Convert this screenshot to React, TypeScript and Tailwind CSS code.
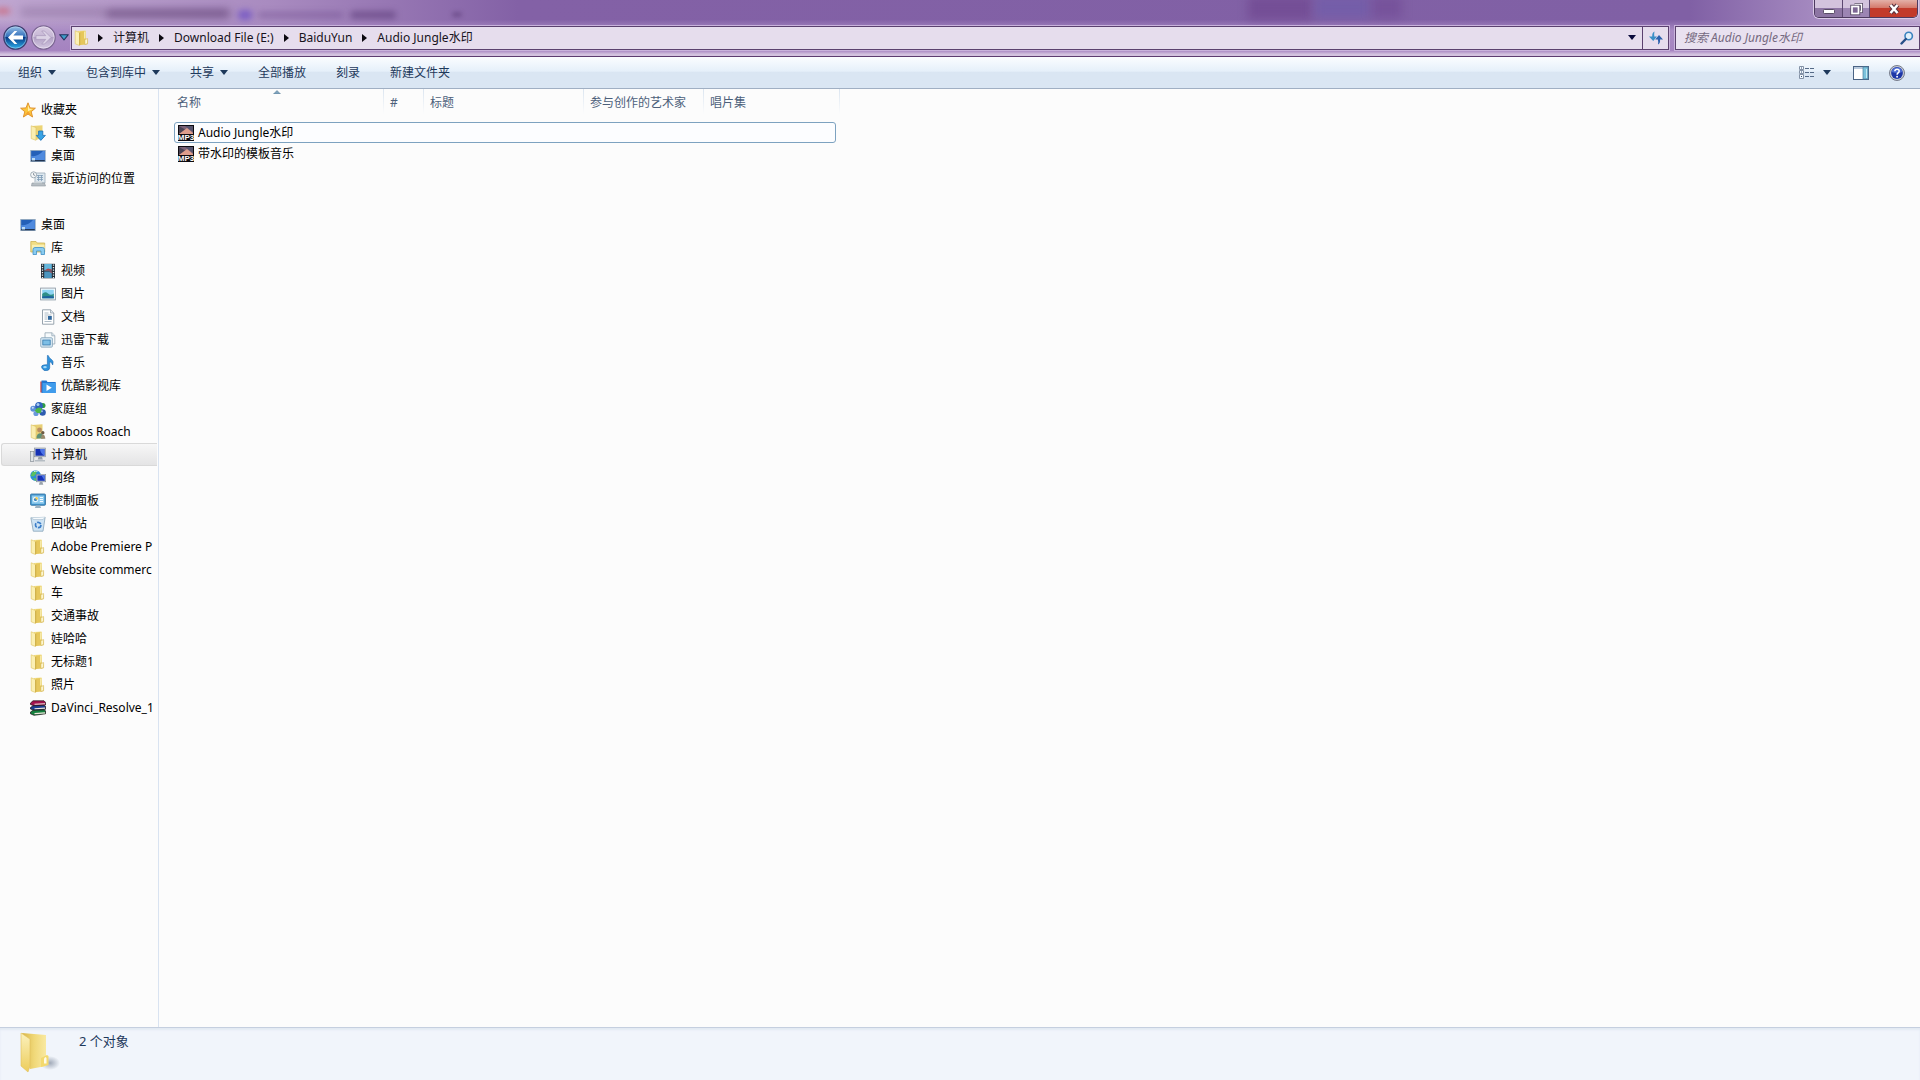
import type { ReactNode } from "react";
import clsx from "clsx";

/* ─────────────────────────────────────────────────────────
   Icons (16px grid unless noted)
───────────────────────────────────────────────────────── */

function Svg({ children, size = 16 }: { children: ReactNode; size?: number }) {
  return (
    <svg width={size} height={size} viewBox={`0 0 ${size} ${size}`} className="shrink-0" aria-hidden="true">
      {children}
    </svg>
  );
}

function FolderIcon() {
  return (
    <Svg>
      <path d="M4 1 11.5.5v13.5L5 15z" fill="#f3df83" />
      <path d="M6 1.5 11.5 1l.5 9 1.5.5v3.7L6 15z" fill="#e6c75c" />
      <path d="M1.2.8 5.5 2.5v13L1.2 13.8z" fill="#fbf0b4" stroke="#dfc35c" strokeWidth=".6" />
      <path d="M10.8 9.5 13.6 8.6v5l-2.8.9z" fill="#fdf7d0" stroke="#d0af47" strokeWidth=".6" />
      <path d="M5.7 2.8V15.2" stroke="#c29f38" strokeWidth=".8" />
      <path d="M10.8 1.5v7" stroke="#fbf2bb" strokeWidth="1.2" />
    </Svg>
  );
}

function StarIcon() {
  return (
    <Svg>
      <path
        d="M8 .8 10 5.9l5.4.3-4.2 3.5 1.4 5.3L8 12.1 3.4 15l1.4-5.3L.6 6.2 6 5.9z"
        fill="#fcc63c"
        stroke="#dd8a25"
        strokeWidth=".9"
        strokeLinejoin="round"
      />
      <path d="M8 2.8 9.3 6.7l3.5.3L8 9.2z" fill="#fff0ac" />
      <path d="M8 9.5 11 13 8 11.4 4.8 13.2z" fill="#f59a2c" />
    </Svg>
  );
}

function DownloadsIcon() {
  return (
    <Svg>
      <path d="M2 1 12.5.3V13L6 15z" fill="#ecd475" />
      <path d="M1.2.8 6 2.5v12.8l-4.8-1.7z" fill="#faeeb0" stroke="#d9bf62" strokeWidth=".6" />
      <path d="M8.6 6h4.2v4.4h2.6L10.8 15.4 6.2 10.4h2.4z" fill="#37a3e6" stroke="#1b6fb4" strokeWidth=".8" />
    </Svg>
  );
}

function DesktopIcon() {
  return (
    <Svg>
      <rect x=".3" y="2" width="15.4" height="12" fill="#8ea6bf" />
      <rect x="1.2" y="3" width="13.6" height="9" fill="#2460b8" />
      <path d="M1.2 12V8Q8 9 13 3h1.8v9z" fill="#4f8ade" />
      <rect x="1.2" y="12" width="13.6" height="1.3" fill="#1f3352" />
      <rect x="2" y="10" width="3" height="2.5" fill="#bcdcf5" />
    </Svg>
  );
}

function RecentIcon() {
  return (
    <Svg>
      <path d="M5 2h10v10H5z" fill="#dfe9f0" stroke="#9aaab8" strokeWidth=".8" />
      <path d="M7 4.5h6M7 6.5h6M7 8.500h6M8.500 4v6M11.500 4v6" stroke="#7f9cb6" strokeWidth=".8" />
      <circle cx="3.6" cy="3.8" r="3" fill="#f5f7f8" stroke="#98a5af" strokeWidth=".9" />
      <path d="M3.6 2v2l1.500.5" fill="none" stroke="#68747f" strokeWidth=".7" />
      <path d="M2 12h12.5l1 3H1.500z" fill="#b7bec4" stroke="#8f979e" strokeWidth=".6" />
      <path d="M4 10.5h8v1.8H4z" fill="#ced5da" />
    </Svg>
  );
}

function LibraryIcon() {
  return (
    <Svg>
      <path d="M.8 1.500H6l1.200 1.500h7.500V12H.8z" fill="#f1dd83" stroke="#cdb354" strokeWidth=".8" />
      <path d="M2 4.800h12.500v5.500H2z" fill="#f9efb2" />
      <path d="M3 14.500v-5q0-2 2-2h7.500q2 0 2 2v5H11V11H6.500v3.500z" fill="#8accf0" stroke="#3f8fc6" strokeWidth=".8" />
    </Svg>
  );
}

function VideoIcon() {
  return (
    <Svg>
      <rect x="1" y=".8" width="14" height="14.5" fill="#232b35" />
      <rect x="4.2" y="1" width="7.6" height="6.5" fill="#65b7dd" />
      <rect x="4.2" y="8.5" width="7.6" height="6.5" fill="#4a95bf" />
      <path d="M4.200 7.500 8 5.500l3.800 1v1zM6 8.500h3l2.800 1.800V8.500z" fill="#b3454a" />
      <path d="M2.500 1.500v14M13.500 1.500v14" stroke="#e5eff2" strokeWidth="1.3" strokeDasharray="1.3 1.2" />
    </Svg>
  );
}

function PictureIcon() {
  return (
    <Svg>
      <rect x=".6" y="2.1" width="14.8" height="11.8" fill="#fff" stroke="#8b9aa6" strokeWidth=".9" />
      <rect x="2.200" y="3.7" width="11.6" height="8.600" fill="#8dd3f3" />
      <path d="M2.200 8Q5 5 8 7.500t5.800 0v4.800H2.200z" fill="#308f88" />
      <path d="M2.200 10.500q6-1 11.600 0v1.800H2.200z" fill="#1d63a0" />
    </Svg>
  );
}

function DocumentIcon() {
  return (
    <Svg>
      <path d="M2.500.8h8L13.800 4v11.200H2.500z" fill="#fff" stroke="#8c9aa5" strokeWidth=".9" />
      <path d="M10.500.8V4h3.300" fill="#dce7ee" stroke="#8c9aa5" strokeWidth=".7" />
      <path d="M4.500 4h4M4.500 6h7M4.500 8h3M4.500 10h3M4.500 12.500h7" stroke="#9babb7" strokeWidth=".8" />
      <rect x="8" y="7" width="3.800" height="3.800" fill="#31699e" />
    </Svg>
  );
}

function ThunderIcon() {
  return (
    <Svg>
      <path d="M5 .8h7L14.800 3.500V12H5z" fill="#f6fafc" stroke="#93a5b2" strokeWidth=".8" />
      <path d="M11.800.8v3h3" fill="#dce7ee" stroke="#93a5b2" strokeWidth=".7" />
      <rect x=".8" y="5.800" width="11.500" height="9.300" rx=".8" fill="#e3f2fb" stroke="#7f9fb6" strokeWidth=".9" />
      <rect x="2.800" y="8" width="7.400" height="5" fill="#7dbfe6" stroke="#3377aa" strokeWidth=".8" />
    </Svg>
  );
}

function MusicIcon() {
  return (
    <Svg>
      <path
        d="M8.200.5q.8 2.500 3.300 4t1.200 5.500q-.8-3-3-3.300v6.100q0 2.300-3 2.900T2 13.200t3.300-3.400l2.100-.1V.5z"
        fill="#2f93dc"
        stroke="#1c66ae"
        strokeWidth=".6"
      />
      <ellipse cx="5" cy="12.200" rx="1.800" ry="1.100" fill="#9fd8fa" />
    </Svg>
  );
}

function YoukuIcon() {
  return (
    <Svg>
      <path d="M.3 3.500h4v11H.3z" fill="#d44c45" />
      <path d="M1.500 2.500h5l1 1.500h8.200v11H1.500z" fill="#2377d1" />
      <path d="M2.500 5h13.200v10H2.500z" fill="#3f9cec" />
      <path d="M6.500 6.500v6.500l5.300-3.200z" fill="#fff" />
    </Svg>
  );
}

function HomegroupIcon() {
  return (
    <Svg>
      <circle cx="3.300" cy="7.800" r="3" fill="#5d90d8" />
      <circle cx="12.900" cy="4.500" r="2.600" fill="#2f9d44" />
      <circle cx="12.600" cy="11.500" r="3.200" fill="#2e5cb0" />
      <circle cx="6" cy="12.500" r="2.600" fill="#6a98dc" />
      <circle cx="9" cy="5" r="3.900" fill="#2f62ba" />
      <path d="M4.800 9.500q3.500-5 7.500-1.500l-1.300 4H7z" fill="#4bb748" />
      <circle cx="8" cy="3.600" r="1.500" fill="#a9cdf3" />
      <circle cx="2.800" cy="6.800" r="1" fill="#c9def7" />
      <circle cx="12" cy="10.300" r="1" fill="#8fb2e8" />
    </Svg>
  );
}

function UserFolderIcon() {
  return (
    <Svg>
      <path d="M2 1 12.500.3V14L6 15z" fill="#e8cf74" />
      <path d="M1.200.8 6 2.500v12.800l-4.800-1.700z" fill="#faeeb0" stroke="#d9bf62" strokeWidth=".6" />
      <circle cx="9.500" cy="6" r="2.400" fill="#b98e62" />
      <path d="M6.500 14.500q0-5 3.300-5.300t3.700 5.300z" fill="#5f9176" />
      <circle cx="12.800" cy="8.700" r="1.700" fill="#6c5b45" />
      <path d="M11 14.800q0-3.800 2-4t2.300 4z" fill="#9a8a6c" />
    </Svg>
  );
}

function ComputerIcon() {
  return (
    <Svg>
      <rect x=".5" y="4.500" width="3.300" height="10" fill="#dfe3e6" stroke="#868f98" strokeWidth=".7" />
      <rect x="4.500" y="1" width="11" height="8.800" fill="#c7ced6" stroke="#818b97" strokeWidth=".6" />
      <rect x="5.500" y="2" width="9" height="6.700" fill="#1430b4" />
      <path d="M10 2h4.500v6.700q-4-2-4.500-6.700z" fill="#4c74e8" />
      <path d="M8.500 10H12l.8 2.500H7.700z" fill="#959ea7" />
      <path d="M5 13h10v1.500H5z" fill="#b5bcc3" />
    </Svg>
  );
}

function NetworkIcon() {
  return (
    <Svg>
      <circle cx="5.600" cy="5.600" r="5.300" fill="#2c8fd8" />
      <path d="M2 2.500q3-2.500 5-1.500L6 4 3.500 6.500.8 6zM3 8l3 .5 1 2.300H5z" fill="#5cc25e" />
      <path d="M4 1.500q2-1 3.500 0" stroke="#d5f0fd" fill="none" />
      <rect x="6.500" y="4.500" width="9.200" height="7.300" fill="#c9d0d8" stroke="#7d8894" strokeWidth=".6" />
      <rect x="7.400" y="5.400" width="7.400" height="5.400" fill="#1734b8" />
      <path d="M11.500 5.400h3.300v5.400z" fill="#5078e6" />
      <path d="M9.800 12h2.600l.9 2.800H8.900z" fill="#9aa3ac" />
    </Svg>
  );
}

function ControlPanelIcon() {
  return (
    <Svg>
      <rect x=".5" y="1" width="15" height="11.300" rx="1" fill="#3f93cc" stroke="#3e7ca8" strokeWidth=".9" />
      <rect x="1.800" y="2.500" width="12.400" height="8.300" fill="#8fcbee" />
      <circle cx="5.500" cy="6.500" r="2.700" fill="#e9f6fd" />
      <circle cx="5.500" cy="6.500" r="1.600" fill="#3581bd" />
      <path d="M5.500 6.500V3.800a2.700 2.700 0 0 1 2.700 2.700z" fill="#f7d05c" />
      <path d="M9.800 4.500h3.200M9.800 6.500h3.200M9.800 8.500h3.200" stroke="#f4fbff" strokeWidth="1" />
      <path d="M6 12.500h4l1.200 2.500H4.800z" fill="#9db2c1" />
    </Svg>
  );
}

function RecycleIcon() {
  return (
    <Svg>
      <path d="M.9 1.800 15.100 1.300 13 15.200H3.300z" fill="#cfe4f4" stroke="#92abbe" strokeWidth=".9" />
      <path d="M.9 1.800 4 3.600h9l2.100-2.300" fill="#f5fafd" stroke="#9fb4c4" strokeWidth=".6" />
      <circle cx="8.200" cy="9" r="2.700" fill="none" stroke="#3a7dc8" strokeWidth="1.700" strokeDasharray="4.500 1.100" />
    </Svg>
  );
}

function WinrarIcon() {
  return (
    <Svg>
      <path d="M.5 3 3 .8h11l1.500 1.500V5L4 5.800.5 4.500z" fill="#a3124e" stroke="#1c1014" strokeWidth=".7" />
      <path d="M.5 7.500 3 5.800l11-.5 1.500 1v3L4 10.200.5 9z" fill="#1c3f92" stroke="#1c1014" strokeWidth=".7" />
      <path d="M.5 12 3 10.300l11-.5 1.500 1v3L4 15.300.5 13.800z" fill="#14813f" stroke="#1c1014" strokeWidth=".7" />
      <path d="M4.500 4.300 15 3.700M4.500 8.700 15 8.100M4.500 13.600l10.500-.7" stroke="#efe7db" strokeWidth="1.100" />
    </Svg>
  );
}

function Mp3Icon() {
  return (
    <Svg>
      <rect width="16" height="16" fill="#0d0b10" />
      <path d="M1 1h14v8H1z" fill="#7d6478" />
      <path d="M1 1 8 5 1 9z" fill="#4a4354" />
      <path d="M1 9 9 3l6 5v1z" fill="#dd9d8c" />
      <path d="M7 1h8v6z" fill="#55546e" />
      <rect x="1" y="9" width="14" height="6.500" fill="#0d0b10" />
      <text
        x="8"
        y="15"
        textAnchor="middle"
        fontSize="8"
        fontWeight="700"
        fill="#fff"
        fontFamily="Liberation Sans, sans-serif"
      >
        MP3
      </text>
    </Svg>
  );
}

function BigFolderIcon() {
  return (
    <Svg size={44}>
      <defs>
        <linearGradient id="bf-back" x1="0" x2="1">
          <stop offset="0" stopColor="#d9b548" />
          <stop offset=".5" stopColor="#f0d878" />
          <stop offset="1" stopColor="#f9e9a0" />
        </linearGradient>
        <linearGradient id="bf-front" x1="0" y1="0" x2="0" y2="1">
          <stop offset="0" stopColor="#fbf1bd" />
          <stop offset="1" stopColor="#edcd5b" />
        </linearGradient>
        <radialGradient id="bf-shadow">
          <stop offset="0" stopColor="#8d97a8" stopOpacity=".8" />
          <stop offset="1" stopColor="#8d97a8" stopOpacity="0" />
        </radialGradient>
      </defs>
      <ellipse cx="32" cy="32" rx="10" ry="7" fill="url(#bf-shadow)" />
      <path d="M4 2 28 4v31l-16 3z" fill="url(#bf-back)" />
      <path d="M3 2 12 8v27l-2 6-7-6z" fill="url(#bf-front)" stroke="#e0c05c" strokeWidth=".6" />
      <path d="M23 27 29 24l1.500 1v9L23 36z" fill="#f3d96e" />
      <path d="M26 27.500q2-3 2.500 0v5H26z" fill="#fffbe6" />
    </Svg>
  );
}

function Caret() {
  return (
    <svg width="8" height="5" viewBox="0 0 8 5" className="shrink-0" aria-hidden="true">
      <path d="M0 0h8L4 5z" fill="currentColor" />
    </svg>
  );
}

function Chevron() {
  return (
    <svg width="5" height="8" viewBox="0 0 5 8" className="shrink-0" aria-hidden="true">
      <path d="M0 0v8l5-4z" fill="#0b0810" />
    </svg>
  );
}

/* ─────────────────────────────────────────────────────────
   Data
───────────────────────────────────────────────────────── */

type TreeItem = { label: string; level: 0 | 1 | 2; icon: () => ReactNode; selected?: boolean };

const favorites: TreeItem[] = [
  { label: "收藏夹", level: 0, icon: StarIcon },
  { label: "下载", level: 1, icon: DownloadsIcon },
  { label: "桌面", level: 1, icon: DesktopIcon },
  { label: "最近访问的位置", level: 1, icon: RecentIcon },
];

const desktop: TreeItem[] = [
  { label: "桌面", level: 0, icon: DesktopIcon },
  { label: "库", level: 1, icon: LibraryIcon },
  { label: "视频", level: 2, icon: VideoIcon },
  { label: "图片", level: 2, icon: PictureIcon },
  { label: "文档", level: 2, icon: DocumentIcon },
  { label: "迅雷下载", level: 2, icon: ThunderIcon },
  { label: "音乐", level: 2, icon: MusicIcon },
  { label: "优酷影视库", level: 2, icon: YoukuIcon },
  { label: "家庭组", level: 1, icon: HomegroupIcon },
  { label: "Caboos Roach", level: 1, icon: UserFolderIcon },
  { label: "计算机", level: 1, icon: ComputerIcon, selected: true },
  { label: "网络", level: 1, icon: NetworkIcon },
  { label: "控制面板", level: 1, icon: ControlPanelIcon },
  { label: "回收站", level: 1, icon: RecycleIcon },
  { label: "Adobe Premiere P", level: 1, icon: FolderIcon },
  { label: "Website commerc", level: 1, icon: FolderIcon },
  { label: "车", level: 1, icon: FolderIcon },
  { label: "交通事故", level: 1, icon: FolderIcon },
  { label: "娃哈哈", level: 1, icon: FolderIcon },
  { label: "无标题1", level: 1, icon: FolderIcon },
  { label: "照片", level: 1, icon: FolderIcon },
  { label: "DaVinci_Resolve_1", level: 1, icon: WinrarIcon },
];

const crumbs = ["计算机", "Download File (E:)", "BaiduYun", "Audio Jungle水印"];

const commands = [
  { label: "组织", menu: true },
  { label: "包含到库中", menu: true },
  { label: "共享", menu: true },
  { label: "全部播放", menu: false },
  { label: "刻录", menu: false },
  { label: "新建文件夹", menu: false },
];

const files = [
  { name: "Audio Jungle水印", focused: true },
  { name: "带水印的模板音乐", focused: false },
];

/* ─────────────────────────────────────────────────────────
   Window frame: caption buttons + address row
───────────────────────────────────────────────────────── */

// Windows behind the glass, seen through the caption
function GlassBackdrop() {
  return (
    <div className="pointer-events-none absolute inset-0 overflow-hidden" aria-hidden="true">
      <div className="absolute top-[7px] left-[20px] h-[10px] w-[85px] rounded bg-[#7f6390]/40 blur-[4px]" />
      <div className="absolute top-[9px] left-[105px] h-[9px] w-[125px] rounded bg-[#543468]/60 blur-[4px]" />
      <div className="absolute top-[8px] left-[-4px] h-[6px] w-[14px] rounded bg-[#d05a68]/70 blur-[3px]" />
      <div className="absolute top-[10px] left-[238px] h-[10px] w-[14px] rounded bg-[#6a4cc4]/70 blur-[3px]" />
      <div className="absolute top-[12px] left-[258px] h-[6px] w-[85px] rounded bg-[#6a4a8c]/45 blur-[3px]" />
      <div className="absolute top-[11px] left-[350px] h-[8px] w-[46px] rounded bg-[#573774]/55 blur-[3px]" />
      <div className="absolute top-[12px] left-[452px] h-[5px] w-[10px] rounded bg-[#573774]/50 blur-[2px]" />
      <div className="absolute top-[-4px] left-[1248px] h-[24px] w-[64px] bg-[#6c438c]/60 blur-[5px]" />
      <div className="absolute top-[-4px] left-[1315px] h-[22px] w-[55px] bg-[#6f5cab]/70 blur-[5px]" />
      <div className="absolute top-[-4px] left-[1372px] h-[22px] w-[30px] bg-[#6f4a95]/60 blur-[5px]" />
    </div>
  );
}

function CaptionButtons() {
  return (
    <div className="flex h-[18px] overflow-hidden rounded-b-[5px] border border-t-0 border-[#4d3a5f] shadow-[0_0_0_1px_#d9c9e6]">
      <button
        type="button"
        aria-label="最小化"
        className="flex w-7 items-center justify-center border-r border-[#5c4871] bg-linear-to-b from-[#d3c3dd] from-45% to-[#8d75a3] to-50%"
      >
        <svg width="12" height="16" viewBox="0 0 12 16">
          <rect x=".5" y="8.500" width="11" height="4" rx=".8" fill="#fff" stroke="#594c66" />
        </svg>
      </button>
      <button
        type="button"
        aria-label="向下还原"
        className="flex w-[27px] items-center justify-center border-r border-[#5c4871] bg-linear-to-b from-[#d3c3dd] from-45% to-[#9c85b3] to-50%"
      >
        <svg width="13" height="16" viewBox="0 0 13 16">
          <path d="M4.500 3.500h7v7h-3" fill="none" stroke="#594c66" strokeWidth="3" />
          <path d="M4.500 3.500h7v7h-3" fill="none" stroke="#fff" strokeWidth="1.300" />
          <rect x="2" y="5.500" width="6.500" height="7" fill="none" stroke="#594c66" strokeWidth="3.400" />
          <rect x="2" y="5.500" width="6.500" height="7" fill="#7d6794" stroke="#fff" strokeWidth="1.700" />
        </svg>
      </button>
      <button
        type="button"
        aria-label="关闭"
        className="flex w-[47px] items-center justify-center bg-linear-to-b from-[#e3b0a8] from-0% via-[#d47a6c] via-45% to-[#c23a2a] to-50%"
      >
        <svg width="14" height="16" viewBox="0 0 14 16">
          <path d="M3.500 4 10.500 12M10.500 4 3.500 12" stroke="#5b3540" strokeWidth="4.600" />
          <path d="M3.500 4 10.500 12M10.500 4 3.500 12" stroke="#fff" strokeWidth="2.500" />
        </svg>
      </button>
    </div>
  );
}

function NavButtons() {
  return (
    <div className="flex items-center gap-[3px]">
      <button type="button" aria-label="后退" className="size-[25px]">
        <svg width="25" height="25" viewBox="0 0 25 25">
          <defs>
            <linearGradient id="nav-back" x1="0" y1="0" x2="0" y2="1">
              <stop offset="0" stopColor="#9cc4ea" />
              <stop offset=".48" stopColor="#2e6cb8" />
              <stop offset=".5" stopColor="#083a86" />
              <stop offset="1" stopColor="#2fb4ee" />
            </linearGradient>
          </defs>
          <circle cx="12.500" cy="12.500" r="11.700" fill="url(#nav-back)" stroke="#3d3c6c" strokeWidth="1.200" />
          <circle cx="12.500" cy="12.500" r="10.600" fill="none" stroke="#c7dff5" strokeOpacity=".6" strokeWidth=".8" />
          <path d="M5 12.500 11.500 6h2.800l-4 4.600H20v3.800h-9.700l4 4.600h-2.800z" fill="#fff" />
        </svg>
      </button>
      <button type="button" aria-label="前进" className="size-[25px]">
        <svg width="25" height="25" viewBox="0 0 25 25">
          <defs>
            <linearGradient id="nav-fwd" x1="0" y1="0" x2="0" y2="1">
              <stop offset="0" stopColor="#d8cbe2" />
              <stop offset=".48" stopColor="#c6b7d5" />
              <stop offset=".5" stopColor="#b1a0c4" />
              <stop offset="1" stopColor="#d6cbe3" />
            </linearGradient>
          </defs>
          <circle cx="12.500" cy="12.500" r="11.700" fill="url(#nav-fwd)" stroke="#7b6692" strokeWidth="1.200" />
          <circle cx="12.500" cy="12.500" r="10.600" fill="none" stroke="#efe7f5" strokeOpacity=".8" strokeWidth=".8" />
          <path
            d="M20 12.500 13.500 6h-2.800l4 4.600H5v3.800h9.700l-4 4.600h2.800z"
            fill="#dcd3e6"
            stroke="#a797ba"
            strokeWidth=".7"
          />
        </svg>
      </button>
      <button type="button" aria-label="最近浏览的位置" className="flex h-[25px] items-center">
        <svg width="10" height="7" viewBox="0 0 10 7">
          <path d="M.7.7h8.600L5 6z" fill="#3f9dcb" stroke="#24335f" strokeWidth="1.100" strokeLinejoin="round" />
        </svg>
      </button>
    </div>
  );
}

function AddressBar() {
  return (
    <div className="flex h-6 min-w-0 flex-1 items-stretch border border-[#5b416f] bg-[#e6dded] shadow-[0_0_0_1px_#c9b3dc]">
      <nav aria-label="地址" className="flex min-w-0 flex-1 items-center gap-2 pl-[2px] text-[#17131c]">
        <FolderIcon />
        {crumbs.map((c) => (
          <span key={c} className="flex items-center gap-[10px] pr-[2px]">
            <Chevron />
            <button type="button" className="whitespace-nowrap">
              {c}
            </button>
          </span>
        ))}
      </nav>
      <button type="button" aria-label="以前的位置" className="flex w-5 items-center justify-center text-[#0b0b3c]">
        <Caret />
      </button>
      <button type="button" aria-label="刷新" className="flex w-[26px] items-center justify-center border-l border-[#5b416f]">
        <svg width="16" height="14" viewBox="0 0 16 14">
          <path d="M6.500.5Q4 1.500 4.200 5.500H1L5.200 10 9 5.500H6.300Q6 2.500 6.500.5z" fill="#3a8fc6" />
          <path d="M10 13.500Q12.500 12.500 12 8.500h3L11 4 7.200 8.500h2.600q.8 2.500.2 5z" fill="#2d62ae" />
        </svg>
      </button>
    </div>
  );
}

function SearchBox() {
  return (
    <label className="flex h-6 w-[245px] shrink-0 items-center border border-[#5b416f] bg-[#e9e1f0] pr-[5px] pl-2 shadow-[0_0_0_1px_#c9b3dc]">
      <input
        type="text"
        aria-label="搜索"
        placeholder="搜索 Audio Jungle水印"
        className="min-w-0 flex-1 bg-transparent italic outline-none placeholder:text-[#75697f]"
      />
      <svg width="14" height="14" viewBox="0 0 14 14" className="shrink-0" aria-hidden="true">
        <circle cx="8.700" cy="5" r="3.700" fill="#e2f0fa" stroke="#3a83bf" strokeWidth="1.600" />
        <path d="M5.800 8 1.500 12.500" stroke="#274f88" strokeWidth="2.400" strokeLinecap="round" />
      </svg>
    </label>
  );
}

/* ─────────────────────────────────────────────────────────
   Command bar
───────────────────────────────────────────────────────── */

function CommandBar() {
  return (
    <div className="flex h-8 items-center justify-between border-b border-[#a0afc3] bg-linear-to-b from-[#fbfdff] from-0% via-[#e6f0fa] via-45% to-[#dae6f3] to-50% pr-[15px] pl-[18px] text-[#1e395b]">
      <div className="flex items-center gap-[30px]">
        {commands.map((c) => (
          <button key={c.label} type="button" className="flex items-center gap-[6px] whitespace-nowrap">
            {c.label}
            {c.menu && <Caret />}
          </button>
        ))}
      </div>
      <div className="flex items-center">
        <button type="button" aria-label="更改视图" className="mr-2">
          <svg width="16" height="13" viewBox="0 0 16 13">
            <path d="M.5.5h4v3h-4zM.5 4.500h4v3h-4zM.5 8.500h4v4h-4z" fill="#f4f9fd" stroke="#8391a5" />
            <path d="M2 2h1M2 6h1M2 10.500h1" stroke="#2d4c76" />
            <path d="M6 2.500h4M11 2.500h4M6 6.500h4M11 6.500h4M6 10.500h4M11 10.500h4" stroke="#556a87" />
          </svg>
        </button>
        <button type="button" aria-label="更多选项" className="mr-[22px]">
          <Caret />
        </button>
        <button type="button" aria-label="显示预览窗格" className="mr-5">
          <svg width="16" height="14" viewBox="0 0 16 14">
            <rect x=".5" y=".5" width="15" height="13" fill="#fff" stroke="#4a6384" />
            <path d="M1 1h14v2H1z" fill="#b9cadd" />
            <rect x="10" y="1" width="5" height="12" fill="#7cc3dc" stroke="#4a7f9e" strokeWidth=".7" />
            <path d="M13.500 3v9" stroke="#c3e8f3" />
          </svg>
        </button>
        <button type="button" aria-label="获取帮助">
          <svg width="16" height="16" viewBox="0 0 16 16">
            <circle cx="8" cy="8" r="7.500" fill="#c8cdd6" stroke="#6b7180" strokeWidth=".9" />
            <circle cx="8" cy="8" r="5.900" fill="#1e36a6" />
            <path d="M2.600 7a5.500 5.500 0 0 1 10.800 0q-5 2-10.800 0z" fill="#4c6bd2" />
            <path
              d="M5.800 6.300Q6 4.300 8.100 4.300t2.100 1.800Q10.200 7.300 9 8 8.100 8.500 8.100 9.700"
              fill="none"
              stroke="#fff"
              strokeWidth="1.500"
            />
            <circle cx="8.100" cy="11.700" r=".95" fill="#fff" />
          </svg>
        </button>
      </div>
    </div>
  );
}

/* ─────────────────────────────────────────────────────────
   Navigation tree + file list
───────────────────────────────────────────────────────── */

function TreeRow({ item }: { item: TreeItem }) {
  const Icon = item.icon;
  return (
    <li
      className={clsx(
        "mx-px border",
        item.selected
          ? "rounded-l-[3px] border-r-0 border-[#d9d9d9] bg-linear-to-b from-[#f7f7f7] to-[#e4e4e5]"
          : "border-transparent"
      )}
    >
      <a
        href="#"
        className={clsx(
          "flex h-[21px] items-center gap-[5px] overflow-hidden whitespace-nowrap text-black",
          item.level === 0 && "pl-[18px]",
          item.level === 1 && "pl-7",
          item.level === 2 && "pl-[38px]"
        )}
      >
        <Icon />
        {item.label}
      </a>
    </li>
  );
}

function Sidebar() {
  return (
    <aside className="w-[159px] shrink-0 border-r border-[#d9e3f1] pt-[9px]">
      <ul className="mb-[23px]">
        {favorites.map((i) => (
          <TreeRow key={i.label} item={i} />
        ))}
      </ul>
      <ul>
        {desktop.map((i) => (
          <TreeRow key={i.label} item={i} />
        ))}
      </ul>
    </aside>
  );
}

function HeaderCell({ children, sorted, span }: { children: ReactNode; sorted?: boolean; span?: number }) {
  return (
    <th colSpan={span} scope="col" className="relative p-0 text-left font-normal">
      <div className="flex h-[25px] items-stretch justify-between">
        <span className={clsx("pt-[6px] whitespace-nowrap", sorted ? "pl-[3px]" : "pl-[6px]")}>{children}</span>
        <span className="w-px bg-linear-to-b from-[#dbe5f0] to-transparent" />
      </div>
      {sorted && (
        <svg width="8" height="4" viewBox="0 0 8 4" className="absolute top-px left-[99px]" aria-hidden="true">
          <path d="M.5 4 4 .5 7.500 4z" fill="#7fa3bd" stroke="#49708f" strokeWidth=".5" />
        </svg>
      )}
    </th>
  );
}

function FileList() {
  return (
    <main className="min-w-0 flex-1 pl-[15px]">
      <table className="w-[666px] table-fixed border-separate border-spacing-0">
        <colgroup>
          <col className="w-[210px]" />
          <col className="w-[40px]" />
          <col className="w-[160px]" />
          <col className="w-[120px]" />
          <col className="w-[132px]" />
          <col className="w-[4px]" />
        </colgroup>
        <thead className="text-[#4c607a]">
          <tr>
            <HeaderCell sorted>名称</HeaderCell>
            <HeaderCell>#</HeaderCell>
            <HeaderCell>标题</HeaderCell>
            <HeaderCell>参与创作的艺术家</HeaderCell>
            <HeaderCell span={2}>唱片集</HeaderCell>
          </tr>
          <tr className="h-2" />
        </thead>
        <tbody>
          {files.map((f) => (
            <tr key={f.name}>
              <td
                colSpan={5}
                className={clsx(
                  "rounded-[3px] border p-0",
                  f.focused ? "border-[#7da2c0] bg-[#fcfdff]" : "border-transparent"
                )}
              >
                <div className="flex h-[19px] items-center gap-1 pl-[3px] text-black">
                  <Mp3Icon />
                  {f.name}
                </div>
              </td>
              <td className="p-0" />
            </tr>
          ))}
        </tbody>
      </table>
    </main>
  );
}

export default function App() {
  return (
    <div className="flex min-h-screen flex-col bg-[#fcfcfc] font-['Noto_Sans','Noto_Sans_CJK_SC',sans-serif] text-xs leading-4">
      <header className="relative border-b border-[#5c3c70] bg-[linear-gradient(to_bottom,transparent_35%,#a98bc4_55%,#a583c0_90%,#d3c2df_97%),linear-gradient(to_right,#bfa6d0_0%,#a98bc0_14%,#8361a6_27%,#8060a5_88%,#ad93c6_96%,#c0abd2_100%)] pb-[6px]">
        <GlassBackdrop />
        <div className="relative flex justify-end pr-[2px]">
          <CaptionButtons />
        </div>
        <div className="relative mt-[7px] flex items-center gap-[2px] pl-[3px]">
          <NavButtons />
          <div className="flex min-w-0 flex-1 items-center gap-[6px]">
            <AddressBar />
            <SearchBox />
          </div>
        </div>
      </header>
      <CommandBar />
      <div className="flex flex-1">
        <Sidebar />
        <FileList />
      </div>
      <footer className="flex h-[53px] items-start gap-[17px] border-t border-[#c5cfdf] bg-[#f1f5fb] pt-[3px] pl-[18px] text-[13px] leading-5 text-[#1e395b] shadow-[inset_0_2px_2px_#e2e9f3]">
        <BigFolderIcon />
        <span>2 个对象</span>
      </footer>
    </div>
  );
}
